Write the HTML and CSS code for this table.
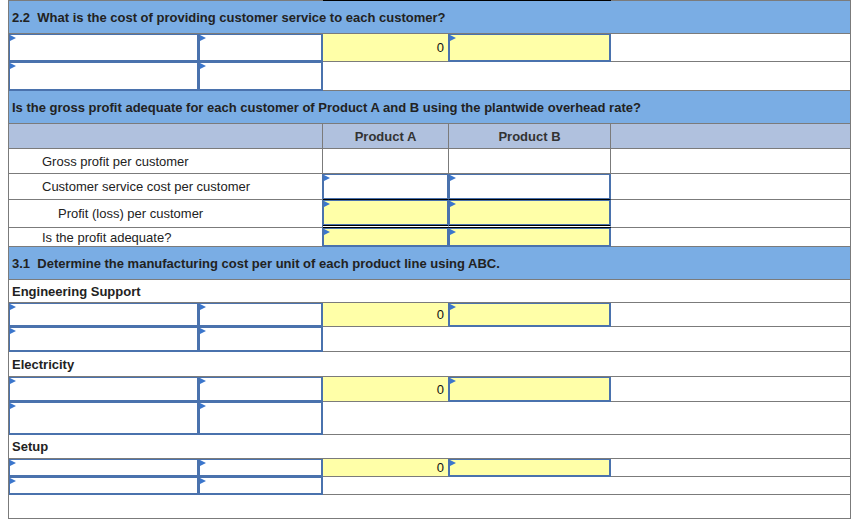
FILE: index.html
```html
<!DOCTYPE html>
<html>
<head>
<meta charset="utf-8">
<link rel="stylesheet" href="styles.css">
</head>
<body>
<table class="sheet">
  <colgroup><col class="c1"><col class="c2"><col class="c3"><col class="c4"><col class="c5"></colgroup>
  <tr class="stub"><td></td><td></td><td class="blk"></td><td class="blk"></td><td></td></tr>
  <tr class="r32 head"><td colspan="5">2.2&nbsp; What is the cost of providing customer service to each customer?</td></tr>
  <tr class="r27"><td class="i"><div class="inp"></div></td><td class="i"><div class="inp"></div></td><td class="zero bl">0</td><td class="i"><div class="inp y"></div></td><td></td></tr>
  <tr class="r28"><td class="i"><div class="inp"></div></td><td class="i"><div class="inp"></div></td><td colspan="3"></td></tr>
  <tr class="r32 head"><td colspan="5">Is the gross profit adequate for each customer of Product A and B using the plantwide overhead rate?</td></tr>
  <tr class="r24 lav"><td colspan="2"></td><td class="ph">Product A</td><td class="ph">Product B</td><td></td></tr>
  <tr class="r24"><td colspan="2" class="lbl">Gross profit per customer</td><td></td><td></td><td></td></tr>
  <tr class="r25"><td colspan="2" class="lbl bl">Customer service cost per customer</td><td class="i ul"><div class="inp"></div></td><td class="i ul"><div class="inp"></div></td><td></td></tr>
  <tr class="r27"><td colspan="2" class="lbl ind bl">Profit (loss) per customer</td><td class="i dul"><div class="inp y p25"></div></td><td class="i dul"><div class="inp y p25"></div></td><td></td></tr>
  <tr class="r18"><td colspan="2" class="lbl bl">Is the profit adequate?</td><td class="i"><div class="inp y"></div></td><td class="i"><div class="inp y"></div></td><td></td></tr>
  <tr class="r32 head"><td colspan="5">3.1&nbsp; Determine the manufacturing cost per unit of each product line using ABC.</td></tr>
  <tr class="r22"><td colspan="5" class="sec">Engineering Support</td></tr>
  <tr class="r23"><td class="i"><div class="inp"></div></td><td class="i"><div class="inp"></div></td><td class="zero bl">0</td><td class="i"><div class="inp y"></div></td><td></td></tr>
  <tr class="r24"><td class="i"><div class="inp"></div></td><td class="i"><div class="inp"></div></td><td colspan="3"></td></tr>
  <tr class="r24"><td colspan="5" class="sec">Electricity</td></tr>
  <tr class="r24"><td class="i"><div class="inp"></div></td><td class="i"><div class="inp"></div></td><td class="zero bl">0</td><td class="i"><div class="inp y"></div></td><td></td></tr>
  <tr class="r32"><td class="i"><div class="inp"></div></td><td class="i"><div class="inp"></div></td><td colspan="3"></td></tr>
  <tr class="r23"><td colspan="5" class="sec">Setup</td></tr>
  <tr class="r17"><td class="i"><div class="inp"></div></td><td class="i"><div class="inp"></div></td><td class="zero bl">0</td><td class="i"><div class="inp y"></div></td><td></td></tr>
  <tr class="r17"><td class="i"><div class="inp"></div></td><td class="i"><div class="inp"></div></td><td colspan="3"></td></tr>
  <tr class="r23"><td colspan="5"></td></tr>
</table>
</body>
</html>
```
FILE: styles.css
```css
* { box-sizing: border-box; }
body {
  margin: 0 0 0 8px;
  font-family: "Liberation Sans", Arial, sans-serif;
  font-size: 13px;
  color: #222;
  background: #fff;
}
.sheet {
  border-collapse: separate;
  border-spacing: 0;
  table-layout: fixed;
  width: 843px;
  border-left: 1px solid #7b7b7b;
}
.c1 { width: 190px; }
.c2 { width: 124px; }
.c3 { width: 126px; }
.c4 { width: 162px; }
.c5 { width: 240px; }
td {
  padding: 0;
  border-right: 1px solid #7b7b7b;
  border-bottom: 1px solid #7b7b7b;
  vertical-align: middle;
  white-space: nowrap;
}
.stub { height: 1px; }
.stub td { border-right: none; }
.stub td.blk { border-bottom-color: #000; }

.r17 { height: 18px; } .r17 .inp { height: 17px; }
.r18 { height: 19px; } .r18 .inp { height: 18px; }
.r22 { height: 23px; }
.r23 { height: 24px; } .r23 .inp { height: 23px; }
.r24 { height: 25px; } .r24 .inp { height: 24px; }
.r25 { height: 26px; } .r25 .inp { height: 25px; }
.r27 { height: 28px; } .r27 .inp { height: 27px; }
.r28 { height: 29px; } .r28 .inp { height: 28px; }
.r32 { height: 33px; } .r32 .inp { height: 32px; }
.r27 .inp.p25 { height: 25px; }

.head td {
  background: #7aade4;
  font-weight: bold;
  padding-left: 3px;
}
.lav td { background: #b0c1de; }
.ph {
  text-align: center;
  font-weight: bold;
  color: #333;
}
.lbl { padding-left: 33px; }
.lbl.ind { padding-left: 49px; }
.sec {
  font-weight: bold;
  padding-left: 3px;
}
.zero {
  background: #ffffa8;
  text-align: right;
  padding-right: 4px;
  color: #111;
}
td.i { border-right-color: #4a72ad; border-bottom-color: #4a72ad; }
td.bl { border-right-color: #4a72ad; }
td.ul { border-bottom-color: #000; }
td.dul { border-bottom: 3px double #000; }

.inp {
  border: 1px solid #4a72ad;
  background: #fff;
}
.inp.y { background: #ffffa8; }
.inp::before {
  content: "";
  display: block;
  width: 0;
  height: 0;
  border-left: 6px solid #3b76cc;
  border-top: 3px solid transparent;
  border-bottom: 3px solid transparent;
}
```
